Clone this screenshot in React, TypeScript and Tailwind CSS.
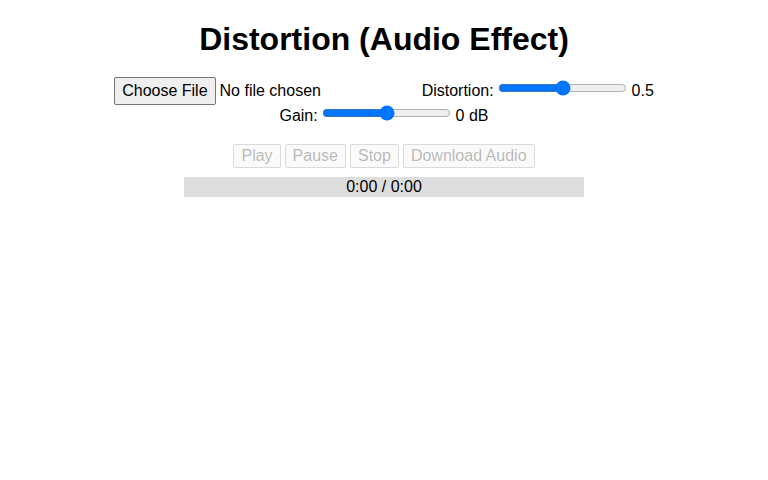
import React from 'react';

export default function App() {
  return (
    <div className="min-h-screen bg-white text-black text-center font-['Liberation_Sans',Arial,sans-serif] text-base">
      <h1 className="text-[32px] leading-[37px] font-bold pt-[21px] pb-[19px]">Distortion (Audio Effect)</h1>
      <div className="mx-auto w-[560px] leading-[22px]">
        <input
          type="file"
          accept="audio/*"
          className="text-base file:mr-1 file:border file:border-[#767676] file:bg-[#efefef] file:px-[7px] file:py-px file:rounded-[2px] file:text-black"
        />{' '}
        <label>
          Distortion:{' '}
          <input type="range" min={0} max={1} step={0.01} defaultValue={0.5} />
        </label>{' '}
        <span>0.5</span>{' '}
        <label>
          Gain:{' '}
          <input type="range" min={-24} max={24} step={1} defaultValue={0} />
        </label>{' '}
        <span>0 dB</span>
      </div>
      <div className="mt-[17px] flex justify-center gap-1">
        {['Play', 'Pause', 'Stop', 'Download Audio'].map((t) => (
          <button
            key={t}
            disabled
            className="border border-[#76767640] bg-[#efefef4d] px-[7px] py-px rounded-[2px] text-[#1010104d] leading-[20px]"
          >
            {t}
          </button>
        ))}
      </div>
      <div className="mx-auto mt-[9px] w-[400px] h-5 bg-[#dddddd] leading-5">0:00 / 0:00</div>
    </div>
  );
}
